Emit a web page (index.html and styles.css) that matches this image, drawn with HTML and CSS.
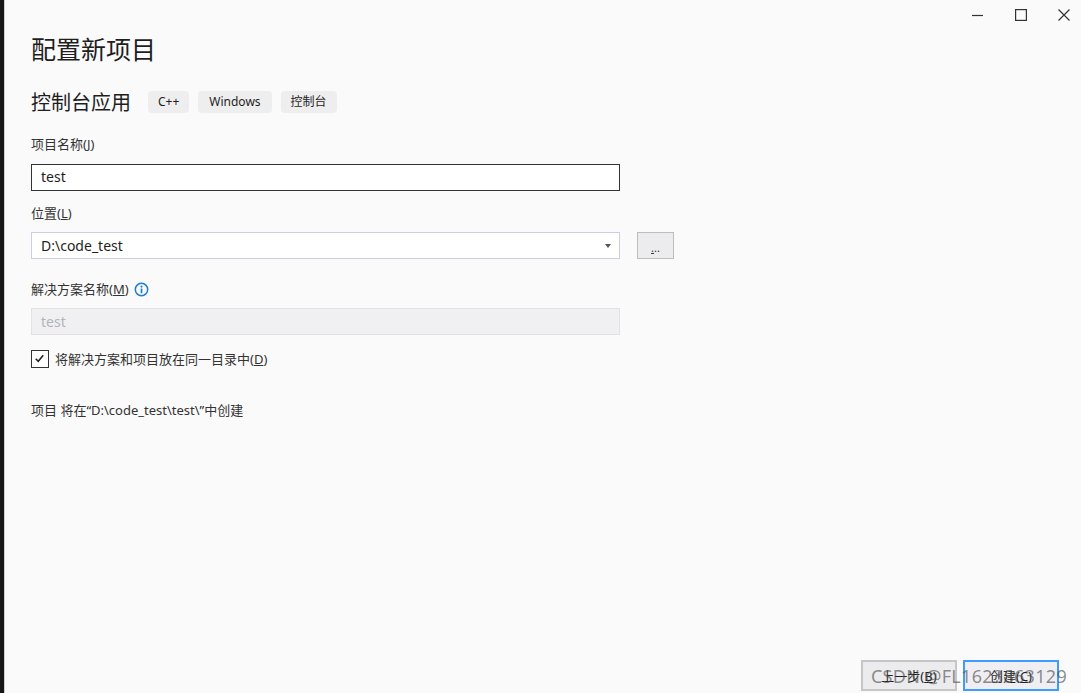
FILE: index.html
```html
<!DOCTYPE html>
<html lang="zh-CN">
<head>
    <meta charset="UTF-8">
    <title>配置新项目</title>
    <link rel="stylesheet" href="styles.css">
</head>
<body>
    <div class="window">
        <div class="titlebar">
            <div class="controls">
                <svg class="ctl" viewBox="0 0 12 12"><path d="M0 6.5h11" stroke="#333" stroke-width="1.2"/></svg>
                <svg class="ctl" viewBox="0 0 12 12"><rect x="0.6" y="0.6" width="10.8" height="10.8" fill="none" stroke="#333" stroke-width="1.2"/></svg>
                <svg class="ctl" viewBox="0 0 12 12"><path d="M0.5 0.5l11 11M11.5 0.5l-11 11" stroke="#333" stroke-width="1.2"/></svg>
            </div>
        </div>

        <div class="content">
            <h1>配置新项目</h1>

            <div class="template-row">
                <h2>控制台应用</h2>
                <div class="tags">
                    <span class="tag">C++</span>
                    <span class="tag">Windows</span>
                    <span class="tag">控制台</span>
                </div>
            </div>

            <div class="field field-name">
                <label><span>项目名称(<u>J</u>)</span></label>
                <div class="input focused">test</div>
            </div>

            <div class="field field-location">
                <label><span>位置(<u>L</u>)</span></label>
                <div class="input-row">
                    <div class="input combo">
                        <span>D:\code_test</span>
                        <span class="arrow"></span>
                    </div>
                    <button class="browse"><u>.</u>..</button>
                </div>
            </div>

            <div class="field field-solution">
                <label><span>解决方案名称(<u>M</u>)</span>
                    <svg class="info" viewBox="0 0 16 16">
                        <circle cx="8" cy="8" r="6.6" fill="none" stroke="#1c7cd5" stroke-width="1.6"/>
                        <circle cx="8" cy="4.9" r="1.1" fill="#1c7cd5"/>
                        <path d="M8 7v5" stroke="#1c7cd5" stroke-width="1.8"/>
                    </svg>
                </label>
                <div class="input disabled">test</div>
            </div>

            <div class="check-row">
                <span class="checkbox">
                    <svg viewBox="0 0 18 18"><path d="M4.5 9.2l3 3.2 6-7.4" fill="none" stroke="#1e1e1e" stroke-width="1.8"/></svg>
                </span>
                <span>将解决方案和项目放在同一目录中(<u>D</u>)</span>
            </div>

            <p class="note">项目 将在“D:\code_test\test\”中创建</p>
        </div>

        <div class="footer">
            <button class="btn">上一步(<u>B</u>)</button>
            <button class="btn primary">创建(<u>C</u>)</button>
            <div class="watermark">CSDN @FL1623863129</div>
        </div>
    </div>
</body>
</html>
```

FILE: styles.css
```css
* {
    box-sizing: border-box;
    margin: 0;
    padding: 0;
}

body {
    font-family: 'Noto Sans', 'Noto Sans CJK SC', sans-serif;
    color: #1e1e1e;
    background-color: #fafafa;
    width: 1081px;
    height: 693px;
    overflow: hidden;
}

.window {
    position: relative;
    height: 693px;
    display: flex;
    flex-direction: column;
    border-left: 4px solid #161616;
    box-shadow: inset 1px 0 0 #cfcfcf;
}

.titlebar {
    height: 30px;
    display: flex;
    justify-content: flex-end;
    align-items: center;
}

.controls {
    display: flex;
    gap: 31px;
    padding-right: 11px;
}

.ctl {
    width: 12px;
    height: 12px;
    display: block;
}

.content {
    padding-left: 27px;
}

h1 {
    font-family: 'Noto Sans CJK SC', sans-serif;
    font-size: 25px;
    font-weight: 400;
    line-height: 34px;
    margin-top: 1px;
}

.template-row {
    display: flex;
    align-items: center;
    height: 24px;
    margin-top: 25px;
}

h2 {
    font-family: 'Noto Sans CJK SC', sans-serif;
    font-size: 20px;
    font-weight: 400;
    line-height: 24px;
}

.tags {
    display: flex;
    gap: 9px;
    margin-left: 17px;
}

.tag {
    height: 22px;
    line-height: 22px;
    padding: 0 10px;
    font-size: 12px;
    background-color: #eeeeef;
    border-radius: 4px;
}

.tag:nth-child(2) {
    padding: 0 11px;
}

.field label {
    display: flex;
    align-items: center;
    gap: 5px;
    font-size: 13px;
    line-height: 18px;
    color: #333;
    margin-bottom: 10px;
}

.field-name {
    margin-top: 21px;
}

.field-name label {
    margin-bottom: 11px;
}

.field-location {
    margin-top: 13px;
}

.field-solution {
    margin-top: 21px;
}

.info {
    width: 15px;
    height: 15px;
}

.input {
    width: 589px;
    height: 27px;
    padding: 0 9px;
    font-size: 14px;
    line-height: 25px;
    background-color: #fff;
    border: 1px solid #cdcee0;
}

.input.focused {
    border: 1.5px solid #333;
    line-height: 24px;
}

.input.disabled {
    background-color: #f0f0f2;
    border-color: #e2e2e6;
    color: #b4b4b8;
}

.input-row {
    display: flex;
    gap: 17px;
}

.combo {
    display: flex;
    justify-content: space-between;
    align-items: center;
}

.arrow {
    width: 0;
    height: 0;
    border-left: 3.5px solid transparent;
    border-right: 3.5px solid transparent;
    border-top: 4px solid #555;
    margin-right: -1px;
}

.browse {
    width: 37px;
    height: 27px;
    font-family: 'Noto Sans', sans-serif;
    font-size: 11px;
    color: #333;
    background-color: #ececef;
    border: 1.5px solid #bdbdbf;
    padding-top: 4px;
}

.check-row {
    display: flex;
    align-items: center;
    gap: 6px;
    margin-top: 14px;
    font-size: 13px;
    color: #333;
}

.checkbox {
    width: 18px;
    height: 18px;
    background-color: #fff;
    border: 1.5px solid #333;
    display: flex;
}

.checkbox svg {
    width: 15px;
    height: 15px;
}

.note {
    margin-top: 33px;
    font-size: 13px;
    line-height: 18px;
    color: #333;
}

.footer {
    position: relative;
    margin-top: auto;
    display: flex;
    justify-content: flex-end;
    gap: 6px;
    padding: 0 22px 2px 0;
}

.btn {
    width: 96px;
    height: 31px;
    font-family: 'Noto Sans', 'Noto Sans CJK SC', sans-serif;
    font-size: 13px;
    color: #1e1e1e;
    background-color: #ececee;
    border: 2px solid #c6c6c8;
}

.btn.primary {
    border-color: #3f9bff;
    background-color: #efeff3;
}

.watermark {
    position: absolute;
    right: 14px;
    bottom: 2px;
    font-family: 'Noto Sans', sans-serif;
    font-size: 18px;
    letter-spacing: 0.3px;
    color: rgba(80, 80, 80, 0.65);
    line-height: 30px;
    pointer-events: none;
}
```
